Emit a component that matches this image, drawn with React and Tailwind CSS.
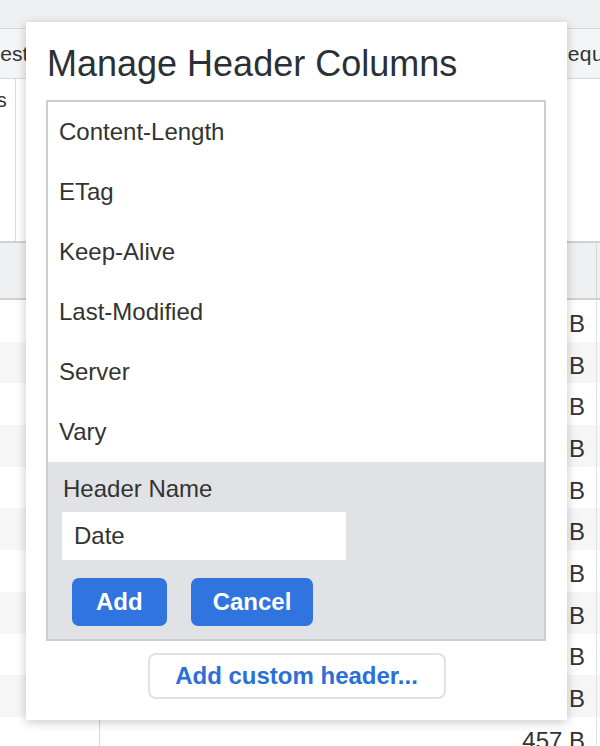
import { useState } from 'react';

const COLUMNS = ['Content-Length', 'ETag', 'Keep-Alive', 'Last-Modified', 'Server', 'Vary'];
const ROWS = Array.from({ length: 11 }, (_, i) => i);

export default function App() {
    const [name, setName] = useState('Date');

    return (
        <div
            className="relative w-[600px] h-[746px] overflow-hidden bg-white text-[#333]"
            style={{ fontFamily: '"Liberation Sans", Arial, Helvetica, sans-serif' }}
        >
            {/* table behind the dialog */}
            <div className="h-[28px] bg-[#eff0f2]" />
            <div className="h-[51px] flex items-center overflow-hidden border-y border-[#d7d8da] bg-[#f4f5f6] text-[21px] whitespace-nowrap">
                <span className="shrink-0 w-[602px] -ml-[50px]">Request</span>
                <span className="shrink-0 tracking-[0.5px]">Request</span>
            </div>
            <div className="h-[162px] flex">
                <div className="w-[16px] border-r border-[#dcdcdc] overflow-hidden">
                    <div className="-ml-[20px] pt-[9px] text-[20px] leading-[24px] whitespace-nowrap">ms</div>
                </div>
            </div>
            <div className="h-[59px] flex border-y-2 border-[#d0d1d3] bg-[#eef0f2]">
                <div className="w-[597px] border-r border-[#d6d6d6]" />
            </div>
            {ROWS.map((r) => (
                <div
                    key={r}
                    className={`h-[41.7px] flex text-[24px] ${r % 2 === 0 ? 'bg-white' : 'bg-[#f6f6f7]'}`}
                >
                    <div className="w-[100px] border-r border-[#d6d6d6]" />
                    <div className="w-[497px] border-r border-[#e2e2e2] flex items-center justify-end pr-[11px] pt-[6px]">
                        457 B
                    </div>
                </div>
            ))}

            {/* Manage header columns dialog */}
            <div className="absolute left-[26px] top-[22px] w-[541px] h-[698px] bg-white shadow-[0_2px_10px_rgba(0,0,0,0.22)] flex flex-col px-[20px] pt-[20px]">
                <h2 className="text-[36px] leading-[43px] text-[#2c3035] pl-px">Manage Header Columns</h2>
                <div className="mt-[15px] w-[500px] border-2 border-[#cdcdcd]">
                    {COLUMNS.map((c) => (
                        <div key={c} className="h-[60px] flex items-center pl-[11px] text-[24px] text-[#333]">
                            {c}
                        </div>
                    ))}
                    <div className="bg-[#e0e2e5] px-[14px] pt-[13px] pb-[13px]">
                        <label className="block text-[24px] leading-[28px] text-[#333] pl-px">Header Name</label>
                        <input
                            className="mt-[9px] block w-[284px] h-[48px] bg-white pl-[12px] text-[24px] text-[#333] outline-none"
                            value={name}
                            onChange={(e) => setName(e.target.value)}
                        />
                        <div className="mt-[18px] flex gap-[24px] pl-[10px]">
                            <button className="h-[48px] px-[24px] rounded-[7px] bg-[#2f74df] text-white font-bold text-[24px]">
                                Add
                            </button>
                            <button className="h-[48px] px-[22px] rounded-[7px] bg-[#2f74df] text-white font-bold text-[24px]">
                                Cancel
                            </button>
                        </div>
                    </div>
                </div>
                <button className="mt-[12px] self-center w-[298px] h-[46px] border-2 border-[#e2e2e2] rounded-[8px] bg-white text-[#2b6fd7] font-bold text-[24px]">
                    Add custom header...
                </button>
            </div>
        </div>
    );
}
